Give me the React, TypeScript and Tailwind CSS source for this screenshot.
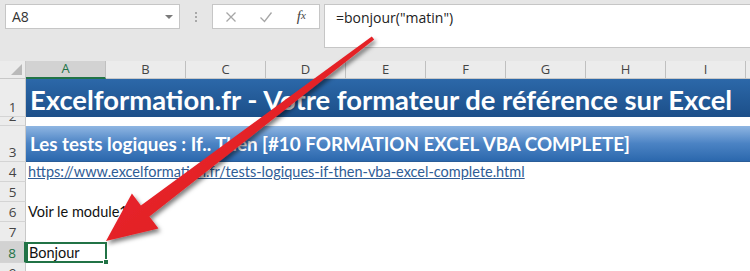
import React from "react";

const columns = ["A", "B", "C", "D", "E", "F", "G", "H", "I", ""];

const uiFont = { fontFamily: '"Open Sans", "Liberation Sans", sans-serif' };
const cellFont = { fontFamily: 'Lato, "Liberation Sans", sans-serif' };

interface RowProps {
  n: number;
  height: string;
  selected?: boolean;
  children?: React.ReactNode;
}

const Row: React.FC<RowProps> = ({ n, height, selected, children }) => (
  <div className={`flex ${height} shrink-0`}>
    <div
      className={`w-[26px] shrink-0 flex items-end justify-center overflow-hidden border-b border-[#d4d4d4] text-[13.5px] leading-[18px] ${
        selected
          ? "bg-[#d2d2d2] text-[#217346] border-r-2 border-r-[#217346]"
          : "bg-[#ececec] text-[#444] border-r border-r-[#c8c8c8]"
      }`}
      style={uiFont}
    >
      {n}
    </div>
    <div className="flex-1 min-w-0 bg-white">{children}</div>
  </div>
);

const Arrow: React.FC = () => (
  <svg
    className="absolute inset-0 pointer-events-none"
    width="750"
    height="271"
    viewBox="0 0 750 271"
  >
    <defs>
      <filter id="shadow" x="-10%" y="-10%" width="130%" height="130%">
        <feDropShadow dx="2" dy="3" stdDeviation="2" floodColor="#000" floodOpacity="0.5" />
      </filter>
      <linearGradient id="red" x1="0" y1="0" x2="1" y2="1">
        <stop offset="0" stopColor="#f0353a" />
        <stop offset="1" stopColor="#d90f16" />
      </linearGradient>
    </defs>
    <polygon
      filter="url(#shadow)"
      fill="url(#red)"
      points="371.8,36.4 374.2,39.6 149.4,216.6 158.5,228.5 106,241 131.9,193.5 140.9,205.4"
    />
  </svg>
);

export default function App() {
  return (
    <div className="relative w-[750px] h-[271px] overflow-hidden bg-[#e6e6e6] flex flex-col">
      {/* Formula bar */}
      <div className="h-[61px] shrink-0 flex items-start pt-[4px] pl-[5px]" style={uiFont}>
        <div className="w-[175px] h-[25px] bg-white border border-[#c6c6c6] flex items-center justify-between pl-[6px] pr-[6px] text-[14px] text-[#333]">
          <span>A8</span>
          <span className="w-0 h-0 border-l-[4px] border-r-[4px] border-t-[4px] border-l-transparent border-r-transparent border-t-[#7a7a7a]" />
        </div>
        <div className="w-[32px] h-[25px] flex flex-col items-center justify-center gap-[2px]">
          <span className="w-[2px] h-[2px] bg-[#a8a8a8]" />
          <span className="w-[2px] h-[2px] bg-[#a8a8a8]" />
          <span className="w-[2px] h-[2px] bg-[#a8a8a8]" />
        </div>
        <div className="w-[108px] h-[25px] bg-white border border-[#c6c6c6] flex items-center">
          <div className="w-[36px] flex justify-center">
            <svg width="12" height="12" viewBox="0 0 12 12">
              <path d="M1.5 1.5l9 9M10.5 1.5l-9 9" stroke="#a6a6a6" strokeWidth="1.3" fill="none" />
            </svg>
          </div>
          <div className="w-[36px] flex justify-center">
            <svg width="14" height="12" viewBox="0 0 14 12">
              <path d="M1.5 6.5l4 4 7-9" stroke="#a6a6a6" strokeWidth="1.3" fill="none" />
            </svg>
          </div>
          <div
            className="w-[36px] flex justify-center text-[15px] italic text-[#444]"
            style={{ fontFamily: '"Liberation Serif", serif' }}
          >
            f<span className="text-[11px] relative top-[2px] italic">x</span>
          </div>
        </div>
        <div className="ml-[4px] flex-1 h-[44px] bg-white border border-r-0 border-[#c6c6c6] pl-[11px] pt-[2px] text-[14px] text-[#222]">
          =bonjour("matin")
        </div>
      </div>

      {/* Column headers */}
      <div className="h-[18px] shrink-0 flex bg-[#ececec] text-[13px] text-[#444]" style={uiFont}>
        <div className="w-[26px] shrink-0 relative border-r border-[#c8c8c8] border-b border-b-[#c8c8c8]">
          <span
            className="absolute right-[3px] bottom-[3px] w-0 h-0"
            style={{ borderBottom: "11px solid #b9b9b9", borderLeft: "11px solid transparent" }}
          />
        </div>
        {columns.map((c, i) => (
          <div
            key={i}
            className={`w-[80px] shrink-0 flex items-center justify-center border-r border-[#c0c0c0] ${
              c === "A" ? "bg-[#d2d2d2] text-[#217346] border-b-2 border-b-[#217346]" : "border-b border-b-[#c8c8c8]"
            }`}
          >
            {c}
          </div>
        ))}
      </div>

      {/* Grid */}
      <div className="flex-1 flex flex-col min-h-0">
        <Row n={1} height="h-[38px]">
          <div className="h-full bg-gradient-to-b from-[#2c68a9] to-[#1c4f89] flex items-end pb-[4px] pl-[4px] text-white font-bold text-[27.4px] leading-none whitespace-nowrap" style={cellFont}>
            Excelformation.fr - Votre formateur de référence sur Excel
          </div>
        </Row>
        <Row n={2} height="h-[9px]" />
        <Row n={3} height="h-[36px]">
          <div className="h-full bg-gradient-to-b from-[#8fb6e2] via-[#4b83c4] to-[#2b68ad] border-b border-[#2a5d98] flex items-center pt-[2px] pl-[4px] text-white font-bold text-[18.8px] whitespace-nowrap" style={cellFont}>
            Les tests logiques : If.. Then [#10 FORMATION EXCEL VBA COMPLETE]
          </div>
        </Row>
        <Row n={4} height="h-[20px]">
          <div className="h-full flex items-center pl-[2px] text-[14.5px] text-[#2f5d96] underline whitespace-nowrap" style={cellFont}>
            https://www.excelformation.fr/tests-logiques-if-then-vba-excel-complete.html
          </div>
        </Row>
        <Row n={5} height="h-[20px]" />
        <Row n={6} height="h-[20px]">
          <div className="h-full flex items-center pl-[2px] text-[14.5px] text-[#111] whitespace-nowrap" style={cellFont}>
            Voir le module11
          </div>
        </Row>
        <Row n={7} height="h-[20px]" />
        <Row n={8} height="h-[21px]" selected>
          <div className="relative w-[81px] h-full border-2 border-[#217346] flex items-center pl-[1px] text-[14.5px] text-[#111]" style={cellFont}>
            Bonjour
            <span className="absolute -right-[4px] -bottom-[4px] w-[6px] h-[6px] bg-[#217346] border border-white" />
          </div>
        </Row>
        <Row n={9} height="h-[20px]" />
      </div>

      <Arrow />
    </div>
  );
}
